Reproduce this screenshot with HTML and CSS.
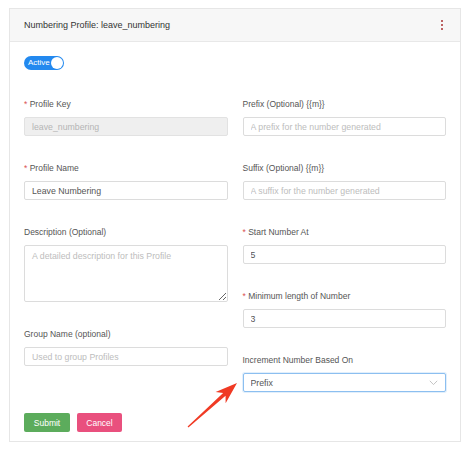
FILE: index.html
```html
<!DOCTYPE html>
<html>
<head>
<meta charset="utf-8">
<link rel="stylesheet" href="styles.css">
</head>
<body>
<div class="card">
  <div class="card-header">
    <span class="title">Numbering Profile: leave_numbering</span>
    <span class="kebab"><i></i><i></i><i></i></span>
  </div>
  <div class="card-body">
    <div class="toggle"><span class="toggle-text">Active</span><span class="knob"></span></div>
    <div class="grid">
      <div class="col">
        <div class="group">
          <label class="label"><span class="req">*</span> Profile Key</label>
          <input class="input disabled" type="text" value="leave_numbering" disabled>
        </div>
        <div class="group">
          <label class="label"><span class="req">*</span> Profile Name</label>
          <input class="input" type="text" value="Leave Numbering">
        </div>
        <div class="group">
          <label class="label">Description (Optional)</label>
          <textarea class="input textarea" placeholder="A detailed description for this Profile"></textarea>
        </div>
        <div class="group">
          <label class="label">Group Name (optional)</label>
          <input class="input" type="text" placeholder="Used to group Profiles">
        </div>
      </div>
      <div class="col">
        <div class="group">
          <label class="label">Prefix (Optional) {{m}}</label>
          <input class="input" type="text" placeholder="A prefix for the number generated">
        </div>
        <div class="group">
          <label class="label">Suffix (Optional) {{m}}</label>
          <input class="input" type="text" placeholder="A suffix for the number generated">
        </div>
        <div class="group">
          <label class="label"><span class="req">*</span> Start Number At</label>
          <input class="input" type="text" value="5">
        </div>
        <div class="group">
          <label class="label"><span class="req">*</span> Minimum length of Number</label>
          <input class="input" type="text" value="3">
        </div>
        <div class="group">
          <label class="label">Increment Number Based On</label>
          <div class="select-wrap">
            <select class="input select"><option>Prefix</option></select>
            <svg class="chevron" width="9" height="6" viewBox="0 0 9 6"><path d="M0.8 0.8 L4.5 4.6 L8.2 0.8" fill="none" stroke="#c4c4c4" stroke-width="1"/></svg>
          </div>
        </div>
      </div>
    </div>
    <div class="actions">
      <button class="btn submit">Submit</button>
      <button class="btn cancel">Cancel</button>
    </div>
  </div>
</div>
<svg class="arrow" width="65" height="60" viewBox="180 375 65 60">
  <polygon fill="#f03a24" points="237,383 225.64,403.28 225.55,395.7 188.4,427.45 187.6,426.55 223.15,393.02 215.62,392.12"/>
</svg>
</body>
</html>
```

FILE: styles.css
```css
* { box-sizing: border-box; }

body {
  margin: 0;
  padding: 8px 0 0 9px;
  background: #fff;
  font-family: "Liberation Sans", Arial, sans-serif;
  position: relative;
}

.card {
  width: 452px;
  border: 1px solid #e6e6e6;
  background: #fff;
}

.card-header {
  height: 33px;
  display: flex;
  align-items: center;
  justify-content: space-between;
  padding: 0 17px 0 14px;
  background: #f7f7f7;
  border-bottom: 1px solid #e8e8e8;
}

.title {
  font-size: 9px;
  color: #333;
}

.kebab {
  display: flex;
  flex-direction: column;
  gap: 2px;
}

.kebab i {
  display: block;
  width: 2px;
  height: 2px;
  border-radius: 50%;
  background: #a83232;
}

.card-body {
  padding: 14px 14px 9px 14px;
}

.toggle {
  width: 40px;
  height: 14px;
  border-radius: 7px;
  background: #2389ef;
  display: flex;
  align-items: center;
  justify-content: space-between;
  padding: 0 1px 0 4px;
}

.toggle-text {
  color: #fff;
  font-size: 8px;
  line-height: 14px;
}

.knob {
  width: 12px;
  height: 12px;
  border-radius: 50%;
  background: #fff;
}

.grid {
  margin-top: 28px;
  display: grid;
  grid-template-columns: 1fr 1fr;
  column-gap: 15px;
  align-items: start;
}

.col {
  display: flex;
  flex-direction: column;
  gap: 26px;
}

.group {
  display: flex;
  flex-direction: column;
}

.label {
  font-size: 8.5px;
  line-height: 12px;
  color: #555;
  margin-bottom: 7px;
}

.req {
  color: #d9534f;
}

.input {
  display: block;
  width: 100%;
  height: 19px;
  border: 1px solid #dcdcdc;
  border-radius: 2px;
  padding: 0 7px;
  font-family: "Liberation Sans", Arial, sans-serif;
  font-size: 8.75px;
  color: #555;
  background: #fff;
  outline: none;
}

.input::placeholder {
  color: #bdbdbd;
}

.input.disabled {
  background: #efefef;
  color: #b5b5b5;
  border-color: #e2e2e2;
}

.textarea {
  height: 57px;
  padding: 4px 7px;
  line-height: 12px;
  resize: vertical;
}

.select-wrap {
  position: relative;
}

.select {
  appearance: none;
  -webkit-appearance: none;
  border-color: #8cbff0;
  box-shadow: 0 0 0 1px rgba(140, 191, 240, 0.25);
  padding-left: 7px;
}

.chevron {
  position: absolute;
  right: 8px;
  top: 7px;
}

.actions {
  margin-top: 21px;
  display: flex;
  gap: 7px;
}

.btn {
  height: 19px;
  border: none;
  border-radius: 2px;
  color: #fff;
  font-family: "Liberation Sans", Arial, sans-serif;
  font-size: 8.5px;
  padding: 0;
}

.submit {
  width: 46px;
  background: #5cac5c;
}

.cancel {
  width: 45px;
  background: #e9507e;
}

.arrow {
  position: absolute;
  left: 180px;
  top: 375px;
}
```
